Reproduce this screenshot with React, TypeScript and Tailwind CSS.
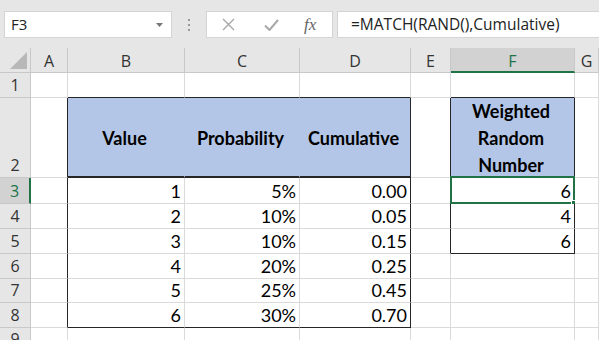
import React from "react";

const cols = ["A", "B", "C", "D", "E", "F", "G"];

const probs = ["5%", "10%", "10%", "20%", "25%", "30%"];
const cums = ["0.00", "0.05", "0.15", "0.25", "0.45", "0.70"];
const weighted = ["6", "4", "6"];

function cellText(row: number, col: number): string {
  if (row >= 3 && row <= 8) {
    const i = row - 3;
    if (col === 1) return String(i + 1);
    if (col === 2) return probs[i];
    if (col === 3) return cums[i];
    if (col === 5 && i < 3) return weighted[i];
  }
  return "";
}

function Cell({ row, col }: { row: number; col: number }) {
  const header = row === 2 && ((col >= 1 && col <= 3) || col === 5);

  // right border
  let r = "border-r-[#dadada]";
  if ((col === 0 || col === 3) && row >= 2 && row <= 8) r = "border-r-[#262626]";
  if ((col === 4 || col === 5) && row >= 2 && row <= 5) r = "border-r-[#262626]";
  if (header && (col === 1 || col === 2)) r = "border-r-[#b4c6e7]";

  // bottom border
  let b = "border-b border-b-[#dadada]";
  if (row === 1 && ((col >= 1 && col <= 3) || col === 5)) b = "border-b border-b-[#262626]";
  if (row === 2 && col >= 1 && col <= 3) b = "border-b-2 border-b-[#262626]";
  if (row === 2 && col === 5) b = "border-b border-b-[#262626]";
  if (row === 8 && col >= 1 && col <= 3) b = "border-b border-b-[#262626]";
  if (row === 5 && col === 5) b = "border-b border-b-[#262626]";

  const bg = header ? "bg-[#b4c6e7]" : "bg-white";
  const text = cellText(row, col);

  return (
    <div className={`relative border-r ${r} ${b} ${bg} flex items-end justify-end pr-[3px] pb-[1px] text-[18px] leading-[22px] text-black`}>
      {header && col === 1 && <span className="w-full self-center pt-[3px] text-center font-bold">Value</span>}
      {header && col === 2 && <span className="w-full self-center pt-[3px] text-center font-bold">Probability</span>}
      {header && col === 3 && <span className="w-full self-center pt-[3px] text-center font-bold">Cumulative</span>}
      {header && col === 5 && (
        <span className="w-full self-center pt-[2px] text-center font-bold leading-[27px]">
          Weighted
          <br />
          Random
          <br />
          Number
        </span>
      )}
      {!header && text}
      {row === 3 && col === 5 && (
        <div className="absolute -left-px -top-[2px] -right-px -bottom-px border-2 border-[#217346]">
          <div className="absolute -right-[4px] -bottom-[4px] h-[6px] w-[6px] border border-white bg-[#217346]" />
        </div>
      )}
    </div>
  );
}

export default function App() {
  const rows = [1, 2, 3, 4, 5, 6, 7, 8, 9];
  return (
    <div className="h-[340px] w-[599px] overflow-hidden bg-[#e6e6e6] font-['Lato',sans-serif]">
      {/* formula bar */}
      <div className="flex h-[48px] items-center pl-[4px] pt-[1px] bg-[#e6e6e6]">
        <div className="flex h-[27px] w-[168px] items-center justify-between border border-[#d4d4d4] bg-white pl-[6px] pr-[8px] font-['Open_Sans',sans-serif] text-[15px] text-[#222]">
          <span>F3</span>
          <svg width="7" height="4" viewBox="0 0 7 4">
            <path d="M0 0 L7 0 L3.5 4 Z" fill="#777" />
          </svg>
        </div>
        <div className="ml-[16px] mr-[16px] flex flex-col gap-[3px]">
          <div className="h-[2px] w-[2px] bg-[#9a9a9a]" />
          <div className="h-[2px] w-[2px] bg-[#9a9a9a]" />
          <div className="h-[2px] w-[2px] bg-[#9a9a9a]" />
        </div>
        <div className="flex h-[27px] w-[127px] items-center border border-[#d4d4d4] bg-white">
          <svg className="ml-[15px]" width="13" height="13" viewBox="0 0 13 13">
            <path d="M1 1 L12 12 M12 1 L1 12" stroke="#a8a8a8" strokeWidth="1.4" fill="none" />
          </svg>
          <svg className="ml-[29px]" width="15" height="12" viewBox="0 0 15 12">
            <path d="M1 6.5 L5.5 11 L14 1" stroke="#a8a8a8" strokeWidth="2" fill="none" />
          </svg>
          <span className="ml-[25px] font-['Liberation_Serif',serif] text-[17px] italic text-[#666]">fx</span>
        </div>
        <div className="ml-[4px] flex h-[27px] flex-1 items-center border border-r-0 border-[#d4d4d4] bg-white pl-[13px] font-['Open_Sans',sans-serif] text-[15.5px] text-[#222]">
          =MATCH(RAND(),Cumulative)
        </div>
      </div>

      {/* sheet */}
      <div className="grid h-[292px] grid-cols-[31px_37px_117px_115px_111px_40px_124px_1fr] grid-rows-[25px_25px_80px_26px_25px_25px_25px_24px_25px_1fr]">
        {/* column header row */}
        <div className="relative border-r border-b border-[#c8c8c8] bg-[#e6e6e6]">
          <svg className="absolute right-[3px] bottom-[3px]" width="17" height="17" viewBox="0 0 17 17">
            <path d="M17 0 L17 17 L0 17 Z" fill="#b8b8b8" />
          </svg>
        </div>
        {cols.map((c) =>
          c === "F" ? (
            <div key={c} className="flex items-center justify-center border-r border-r-[#c8c8c8] border-b-2 border-b-[#217346] bg-[#d2d2d2] pt-[2px] font-['Open_Sans',sans-serif] text-[16px] text-[#217346]">
              {c}
            </div>
          ) : (
            <div key={c} className="flex items-center justify-center border-r border-b border-[#c8c8c8] bg-[#e6e6e6] pt-[1px] font-['Open_Sans',sans-serif] text-[16px] text-[#333]">
              {c}
            </div>
          )
        )}
        {rows.map((r) => (
          <React.Fragment key={r}>
            {r === 3 ? (
              <div className="flex items-end justify-center border-r-2 border-r-[#217346] border-b border-b-[#c8c8c8] bg-[#d2d2d2] font-['Open_Sans',sans-serif] text-[16px] leading-[23px] text-[#217346]">
                {r}
              </div>
            ) : (
              <div className="flex items-end justify-center border-r border-b border-[#c8c8c8] bg-[#e6e6e6] font-['Open_Sans',sans-serif] text-[16px] leading-[23px] text-[#333]">
                {r}
              </div>
            )}
            {cols.map((_, ci) => (
              <Cell key={ci} row={r} col={ci} />
            ))}
          </React.Fragment>
        ))}
      </div>
    </div>
  );
}
